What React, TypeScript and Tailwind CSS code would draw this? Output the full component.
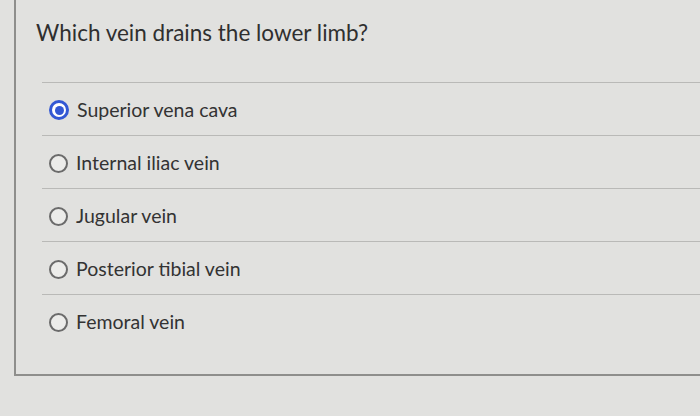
import React from "react";

const options = [
  { label: "Superior vena cava", selected: true },
  { label: "Internal iliac vein", selected: false },
  { label: "Jugular vein", selected: false },
  { label: "Posterior tibial vein", selected: false },
  { label: "Femoral vein", selected: false },
];

function Radio({ selected }: { selected: boolean }) {
  if (selected) {
    return (
      <span className="flex h-[20px] w-[20px] shrink-0 items-center justify-center rounded-full border-[3px] border-[#3358d4] bg-white">
        <span className="h-[9px] w-[9px] rounded-full bg-[#3358d4]" />
      </span>
    );
  }
  return <span className="h-[19px] w-[19px] shrink-0 rounded-full border-[2.5px] border-[#6b6b6b] bg-[#ececea]" />;
}

export default function App() {
  return (
    <div
      className="h-[416px] w-[700px] overflow-hidden bg-[#e1e1df] text-[#333333]"
      style={{ fontFamily: "Lato, 'Open Sans', sans-serif" }}
    >
      <div className="ml-[14px] h-[376px] border-b-2 border-l-2 border-[#8e8e8c]">
        <div className="pl-[20px] pt-[19px] text-[22.5px] leading-[28px] text-[#2f2f2f]">
          Which vein drains the lower limb?
        </div>
        <div className="ml-[26px] mt-[35px]">
          {options.map((o, i) => (
            <div key={i} className="flex h-[53px] items-center gap-[8px] border-t border-[#b9b9b7] pl-[7px] pt-[2px]">
              <Radio selected={o.selected} />
              <span className="text-[19.5px] leading-[24px] text-[#333333]">{o.label}</span>
            </div>
          ))}
        </div>
      </div>
    </div>
  );
}
